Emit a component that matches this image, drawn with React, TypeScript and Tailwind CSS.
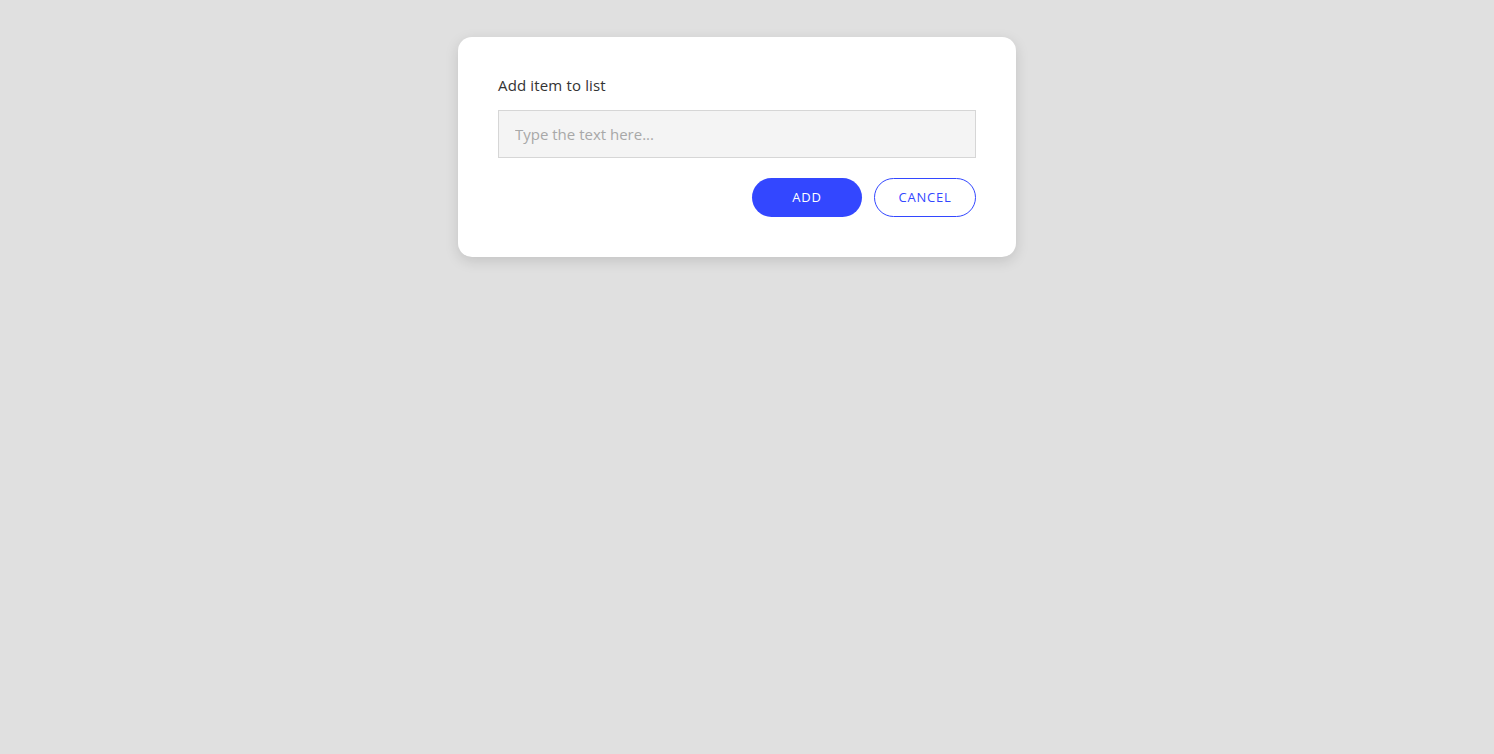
export default function App() {
  return (
    <div className="min-h-screen bg-[#e0e0e0] pr-5 pt-[37px] font-['Open_Sans',sans-serif]">
      <div className="mx-auto w-[558px] rounded-[14px] bg-white p-10 shadow-[0_4px_14px_rgba(0,0,0,0.13)]">
        <label className="block text-[15px] leading-4 tracking-[0.01em] text-[#333]">Add item to list</label>
        <input
          type="text"
          placeholder="Type the text here..."
          className="mt-[17px] block h-[48px] w-full border border-[#d6d6d6] bg-[#f4f4f4] px-4 text-[15px] text-[#333] outline-none placeholder:text-[#a8a8a8]"
        />
        <div className="mt-5 flex justify-end gap-3">
          <button className="h-[39px] w-[110px] rounded-full bg-[#3347ff] text-[13px] uppercase tracking-[0.06em] text-white">
            Add
          </button>
          <button className="h-[39px] w-[102px] rounded-full border border-[#3347ff] bg-white text-[13px] uppercase tracking-[0.06em] text-[#3347ff]">
            Cancel
          </button>
        </div>
      </div>
    </div>
  );
}
